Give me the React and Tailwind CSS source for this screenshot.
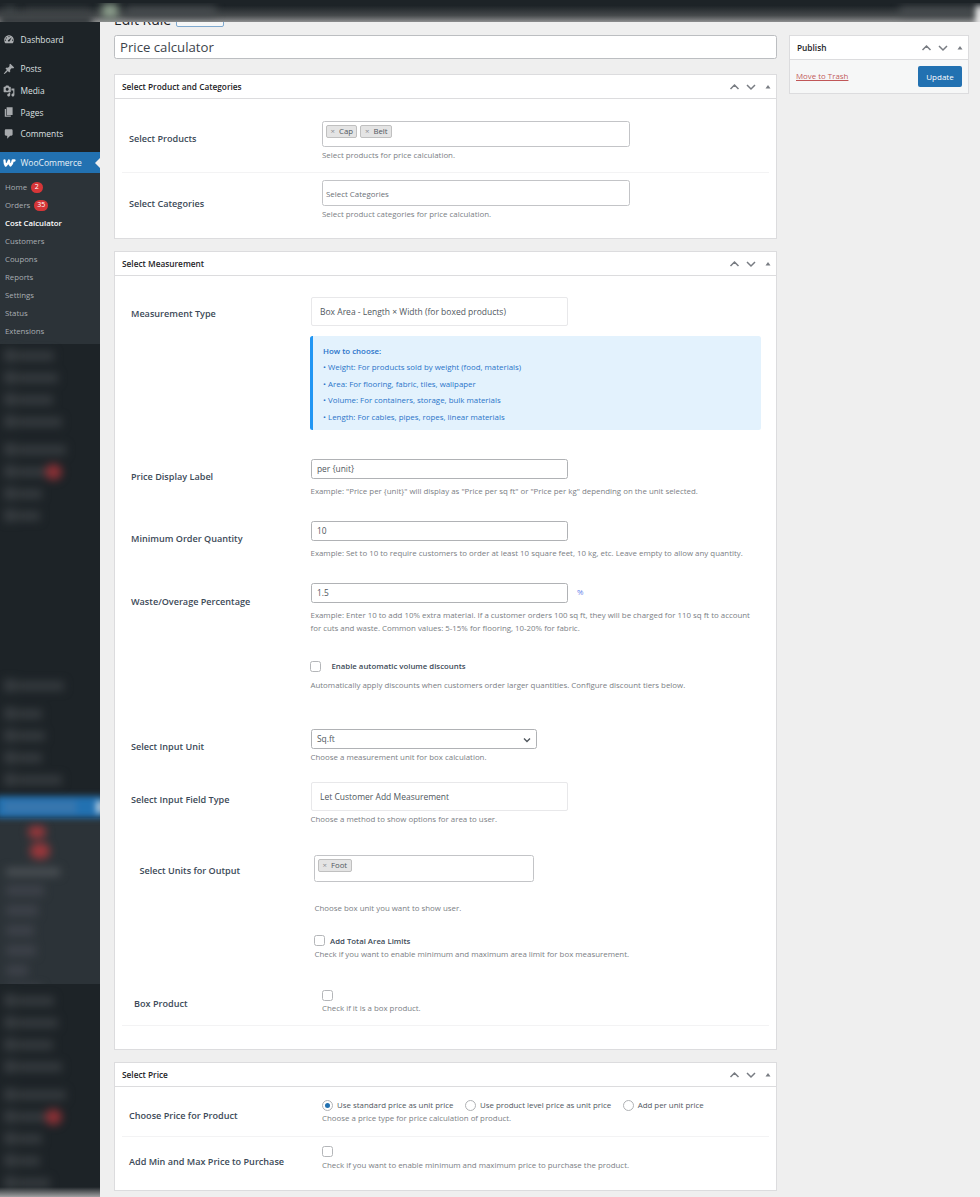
import React from 'react';
import clsx from 'clsx';

const mainMenu = [
    { name: 'Dashboard', top: 'mt-[6.500px]', path: 'M3.76 17h12.48C17.6 15.4 18 13.5 18 11.75c0-4.42-3.58-8-8-8s-8 3.58-8 8c0 1.75.42 3.65 1.76 5.25zM9 6a1 1 0 1 1 2 0 1 1 0 0 1-2 0zM4.4 8.2a1 1 0 1 1 2 0 1 1 0 0 1-2 0zM8.5 13.9c-.6-.83-.37-1.9.4-2.4.75-.5 5.6-4 5.6-4s-2.9 5.3-3.4 6.1c-.6.8-1.9 1-2.6.3zM3 12a1 1 0 1 1 2 0 1 1 0 0 1-2 0zM15 12a1 1 0 1 1 2 0 1 1 0 0 1-2 0z' },
    { name: 'Posts', top: 'mt-[8px]', path: 'M10.44 3.02l1.82-1.82 6.36 6.35-1.83 1.82c-1.05-.68-2.48-.57-3.41.36l-.75.75c-.92.93-1.04 2.35-.35 3.41l-1.83 1.82-2.41-2.41-2.8 2.79c-.42.42-3.38 2.71-3.8 2.29s1.86-3.39 2.28-3.81l2.79-2.79L4.1 9.36l1.83-1.82c1.05.69 2.48.57 3.4-.36l.75-.75c.93-.92 1.05-2.35.36-3.41z' },
    { name: 'Media', top: '', path: 'M13 11V4c0-.55-.45-1-1-1h-1.67L9 1H5L3.67 3H2c-.55 0-1 .45-1 1v7c0 .55.45 1 1 1h10c.55 0 1-.45 1-1zM7 4.5c1.38 0 2.5 1.12 2.5 2.5S8.38 9.5 7 9.5 4.5 8.38 4.5 7 5.62 4.5 7 4.5zM14 6h5v10.5c0 1.38-1.12 2.5-2.5 2.5S14 17.88 14 16.5s1.12-2.5 2.5-2.5c.17 0 .34.02.5.05V9h-3V6zM10 14.05V13h2v3.5c0 1.38-1.12 2.5-2.5 2.5S7 17.88 7 16.5 8.12 14 9.5 14c.17 0 .34.02.5.05z' },
    { name: 'Pages', top: '', path: 'M6 15V2h10v13H6zm-1 1h8v2H3V5h2v11z' },
    { name: 'Comments', top: '', path: 'M5 2h9c1.1 0 2 .9 2 2v7c0 1.1-.9 2-2 2h-2l-5 5v-5H5c-1.1 0-2-.9-2-2V4c0-1.1.9-2 2-2z' },
];

const subMenu = [
    { name: 'Home', badge: '2' },
    { name: 'Orders', badge: '35' },
    { name: 'Cost Calculator', active: true },
    { name: 'Customers' },
    { name: 'Coupons' },
    { name: 'Reports' },
    { name: 'Settings' },
    { name: 'Status' },
    { name: 'Extensions' },
];

// obscured menu entries: width of the label, extra space above, counter bubble
const hiddenTop = [
    { w: 34 }, { w: 38 }, { w: 33 }, { w: 42 },
    { w: 46, gap: 'mt-[6px]' }, { w: 28, badge: true }, { w: 22 }, { w: 20 },
];
const hiddenMiddle = [
    { w: 44 }, { w: 22, gap: 'mt-[6px]' }, { w: 25 }, { w: 22 }, { w: 42 },
];
const hiddenSub = [38, 32, 28, 30, 22, 36];

const HiddenItem = ({ w, gap, badge }) => (
    <div className={clsx('flex h-[22px] shrink-0 items-center gap-px pl-1', gap)}>
        <span className="h-[13px] w-3 bg-[#363b3f]" />
        <span className="h-[10px] bg-[#34393d]" style={{ width: w + 3 }} />
        {badge && <span className="-ml-1 h-4 w-[17px] rounded-full bg-[#8a3035]" />}
    </div>
);

const Sidebar = () => (
    <aside className="flex w-[100px] shrink-0 flex-col overflow-hidden bg-[#1d2327]">
        {mainMenu.map((item) => (
            <div key={item.name} className={clsx('flex h-[21.7px] shrink-0 items-center gap-[5.500px] pl-[3px]', item.top)}>
                <svg viewBox="0 0 20 20" className="h-3 w-3 fill-[#a7aaad]"><path fillRule="evenodd" d={item.path} /></svg>
                <span className="pt-px text-[8.4px] text-[#dfe0e1]">{item.name}</span>
            </div>
        ))}
        <div className="mt-[7px] flex h-[21.500px] shrink-0 items-center bg-[#2271b1] pl-[3px]">
            <svg viewBox="0 0 26 16" className="h-2 w-[13px] fill-none stroke-white stroke-[4.6]">
                <path strokeLinejoin="round" strokeLinecap="round" d="M3 3c0 3 .5 7 2.5 10C8 11 10.500 7 12 3c0 4 1 8 3 10 2.500-2.500 4-6 4.500-10M19.500 3H23" />
            </svg>
            <span className="ml-[4.500px] flex-1 pt-px text-[8.500px] text-[#e9f1f7]">WooCommerce</span>
            <span className="h-0 w-0 border-y-[5px] border-r-[5px] border-y-transparent border-r-[#efefef]" />
        </div>
        <div className="flex h-[170.500px] shrink-0 flex-col bg-[#2c3338] pt-[5px]">
            {subMenu.map((item) => (
                <div key={item.name} className="flex h-[18.07px] shrink-0 items-center gap-1 pl-[5px]">
                    <span className={clsx('text-[7.8px]', item.active ? 'font-semibold text-white' : 'text-[#a9aeb3]')}>{item.name}</span>
                    {item.badge && (
                        <span className="flex h-[11.500px] min-w-[11.500px] items-center justify-center rounded-full bg-[#d63638] px-[3px] text-[7px] text-white">{item.badge}</span>
                    )}
                </div>
            ))}
        </div>
        <div className="h-[300px] shrink-0 pt-px blur-[4px]">
            {hiddenTop.map((item, i) => <HiddenItem key={i} {...item} />)}
        </div>
        <div className="mt-[30px] h-[122px] shrink-0 pt-px blur-[4px]">
            {hiddenMiddle.map((item, i) => <HiddenItem key={i} {...item} />)}
        </div>
        <div className="-mx-1 flex h-[22px] shrink-0 items-center justify-between bg-[#2271b1] pl-2 blur-[3px]">
            <span className="h-3 w-[72px] bg-[#3876ae]" />
            <span className="h-3 w-2 bg-[#b5cde2]" />
        </div>
        <div className="h-[166px] shrink-0 overflow-hidden bg-[#2c3338]">
            <div className="flex flex-col gap-[9px] pt-[8px] pl-[6px] blur-[4px]">
                <div className="ml-[22px] h-3 w-[18px] rounded-full bg-[#9a373b]" />
                <div className="-mt-1 ml-6 h-4 w-5 rounded-full bg-[#9a373b]" />
                <div className="h-2 w-[54px] bg-[#4c5155]" />
                {hiddenSub.map((w, i) => <div key={i} className="h-[11px] bg-[#3d4149]" style={{ width: w }} />)}
            </div>
        </div>
        <div className="mt-[6px] shrink-0 blur-[4px]">
            {hiddenTop.map((item, i) => <HiddenItem key={i} {...item} />)}
            <HiddenItem w={30} />
        </div>
    </aside>
);

const Panel = ({ title, className, children }) => (
    <section className={clsx('border border-[#dcdcde] bg-white', className)}>
        <header className="flex h-[24px] items-center border-b border-[#dcdcde] pr-[5px] pl-[7px]">
            <h2 className="flex-1 pt-px text-[8.3px] font-semibold text-[#1d2327]">{title}</h2>
            <svg viewBox="0 0 42 10" className="h-[10px] w-[42px] fill-none stroke-[#787c82] stroke-[1.5]">
                <path d="M1.500 7l4-4 4 4M18 3l4 4 4-4" />
                <path className="fill-[#787c82] stroke-none" d="M36.500 6.500l2.500-3.500 2.500 3.500z" />
            </svg>
        </header>
        {children}
    </section>
);

const Row = ({ label, className, labelClass, fieldClass, children }) => (
    <div className={clsx('flex', className)}>
        <div className={clsx('shrink-0 text-[9.1px] leading-[13px] font-semibold text-[#3c4a58]', labelClass)}>{label}</div>
        <div className={clsx('min-w-0 flex-1', fieldClass)}>{children}</div>
    </div>
);

const Help = ({ className, children }) => (
    <p className={clsx('text-[7.89px] leading-[13px] whitespace-nowrap text-[#7b8085]', className)}>{children}</p>
);

const Checkbox = () => <span className="block h-[11px] w-[11px] shrink-0 rounded-[2.500px] border border-[#b4b6b9] bg-white" />;

const TextBox = ({ children }) => (
    <div className="flex h-[20px] w-[257px] shrink-0 items-center rounded-[2.500px] border border-[#b0b2b5] pt-px pl-[5px] text-[8.4px] text-[#50575e]">{children}</div>
);

const StaticBox = ({ children }) => (
    <div className="flex h-[29px] w-[257px] items-center rounded-[2px] border border-[#e8e8ea] pt-[2px] pl-2 text-[8.500px] text-[#50575e]">{children}</div>
);

const TagBox = ({ tags, className, placeholder }) => (
    <div className={clsx('flex items-start gap-[3px] rounded-[2.500px] border border-[#c3c4c7] px-[3px] pt-[3px]', className)}>
        {tags.map((tag) => (
            <span key={tag} className="flex h-[13px] items-center gap-1 rounded-[2px] border border-[#c0c0c0] bg-[#e4e4e4] px-[3.500px] pt-px text-[7.8px] text-[#50575e]">
                <span className="text-[#8c8f94]">×</span>{tag}
            </span>
        ))}
        {placeholder && <span className="pt-1 text-[7.9px] leading-[13px] text-[#6c7177]">{placeholder}</span>}
    </div>
);

const Radio = ({ checked, children }) => (
    <label className="flex items-center gap-[4px] text-[7.9px] text-[#50575e]">
        <span className="flex h-[11px] w-[11px] items-center justify-center rounded-full border border-[#b0b2b5] bg-white">
            {checked && <span className="h-[5px] w-[5px] rounded-full bg-[#2271b1]" />}
        </span>
        <span className="pt-px">{children}</span>
    </label>
);

const tips = [
    'Weight: For products sold by weight (food, materials)',
    'Area: For flooring, fabric, tiles, wallpaper',
    'Volume: For containers, storage, bulk materials',
    'Length: For cables, pipes, ropes, linear materials',
];

const App = () => (
    <div className="relative flex h-[1197px] w-[980px] flex-col overflow-hidden bg-[#efefef] font-['Open_Sans',sans-serif]">
        <div className="relative flex h-[22px] shrink-0 items-center gap-2 overflow-hidden bg-linear-to-b from-[#1d2327] from-25% via-[#45494b] via-70% to-[#8e8f90] pl-1">
            <span className="h-3 w-3 bg-[#4a4f52]/50 blur-[4px]" />
            <span className="h-2 w-[66px] bg-[#4a4f52]/40 blur-[4px]" />
            <span className="ml-1 h-[14px] w-[16px] bg-[#8ea08e] blur-[4px]" />
            <span className="h-2 w-[90px] bg-[#4a4f52] blur-[4px]" />
            <span className="mr-1 ml-auto h-2 w-[76px] bg-[#4a4f52] blur-[4px]" />
            <span className="absolute -bottom-1 left-0 h-[10px] w-[92px] bg-[#33383b] blur-[3px]" />
            <span className="absolute -right-1 -bottom-1 h-5 w-2 bg-white blur-[3px]" />
            <span className="absolute inset-x-0 top-0 h-[3px] bg-[#1d2327]" />
        </div>
        <div className="flex h-[1175px]">
            <Sidebar />
            <main className="flex w-[677px] shrink-0 flex-col pl-[14px]">
                <div className="flex h-[5px] shrink-0 items-end overflow-hidden">
                    <h1 className="mb-[-2px] text-[14px] leading-[19px] text-[#1d2327]">Edit Rule</h1>
                    <span className="ml-[5px] h-[14px] w-[48px] rounded-[2px] border border-[#7fa9cf] bg-[#f6f7f7]" />
                </div>
                <div className="mt-[8px] flex h-[24px] shrink-0 items-center rounded-[2.500px] border border-[#bcbec1] bg-white pt-[2px] pl-[5px] text-[13.2px] text-[#3c434a]">Price calculator</div>

                <Panel title="Select Product and Categories" className="mt-[15px] h-[165px] shrink-0">
                    <Row label="Select Products" className="mx-[7px] h-[74px] border-b border-[#f3f3f4]" labelClass="w-[200px] pl-[7px] pt-[33px]" fieldClass="pt-[22px]">
                        <TagBox tags={['Cap', 'Belt']} className="h-[26px] w-[308px]" />
                        <Help className="mt-[2px]">Select products for price calculation.</Help>
                    </Row>
                    <Row label="Select Categories" className="mx-[7px]" labelClass="w-[200px] pl-[7px] pt-[23.500px]" fieldClass="pt-[7px]">
                        <TagBox tags={[]} placeholder="Select Categories" className="h-[26px] w-[308px]" />
                        <Help className="mt-[2px]">Select product categories for price calculation.</Help>
                    </Row>
                </Panel>

                <Panel title="Select Measurement" className="mt-[12px] h-[799px] shrink-0">
                    <Row label="Measurement Type" className="h-[170px]" labelClass="w-[196px] pl-4 pt-[31px]" fieldClass="pt-[21px]">
                        <StaticBox>Box Area - Length × Width (for boxed products)</StaticBox>
                        <div className="-ml-px mt-[10px] h-[94px] w-[451px] rounded-[2.500px] border-l-[3px] border-[#2196f3] bg-[#e3f2fd] pt-[6.500px] pl-[10px] text-[7.89px] leading-[16.500px] text-[#2a74c9]">
                            <p className="font-semibold">How to choose:</p>
                            {tips.map((tip) => <p key={tip}>• {tip}</p>)}
                        </div>
                    </Row>
                    <Row label="Price Display Label" className="h-[62px]" labelClass="w-[196px] pl-4 pt-[24px]" fieldClass="pt-[13px]">
                        <TextBox>{'per {unit}'}</TextBox>
                        <Help className="-ml-[0.500px] mt-[6px]">{'Example: "Price per {unit}" will display as "Price per sq ft" or "Price per kg" depending on the unit selected.'}</Help>
                    </Row>
                    <Row label="Minimum Order Quantity" className="h-[62px]" labelClass="w-[196px] pl-4 pt-[24px]" fieldClass="pt-[13px]">
                        <TextBox>10</TextBox>
                        <Help className="-ml-[0.500px] mt-[6px]">Example: Set to 10 to require customers to order at least 10 square feet, 10 kg, etc. Leave empty to allow any quantity.</Help>
                    </Row>
                    <Row label="Waste/Overage Percentage" className="h-[146px]" labelClass="w-[196px] pl-4 pt-[24.500px]" fieldClass="pt-[13px]">
                        <div className="flex items-center gap-[9px]">
                            <TextBox>1.5</TextBox>
                            <span className="text-[7.8px] text-[#667eea]">%</span>
                        </div>
                        <Help className="-ml-[0.500px] mt-[6px]">Example: Enter 10 to add 10% extra material. If a customer orders 100 sq ft, they will be charged for 110 sq ft to account</Help>
                        <Help className="-ml-[0.500px]">for cuts and waste. Common values: 5-15% for flooring, 10-20% for fabric.</Help>
                        <div className="-ml-px mt-[26px] flex h-[11px] items-center gap-[10.500px] text-[7.8px] font-semibold text-[#3c4a58]">
                            <Checkbox /><span className="pt-px">Enable automatic volume discounts</span>
                        </div>
                        <Help className="-ml-[0.500px] mt-[7px]">Automatically apply discounts when customers order larger quantities. Configure discount tiers below.</Help>
                    </Row>
                    <Row label="Select Input Unit" className="h-[54px]" labelClass="w-[196px] pl-4 pt-[24px]" fieldClass="pt-[13px]">
                        <div className="flex h-[20px] w-[226px] items-center justify-between rounded-[2.500px] border border-[#b0b2b5] pt-px pr-[5px] pl-[5px] text-[8.4px] text-[#50575e]">
                            Sq.ft
                            <svg viewBox="0 0 8 6" className="h-[6px] w-[8px] fill-none stroke-[#50575e] stroke-[1.4]"><path d="M1 1.500l3 3 3-3" /></svg>
                        </div>
                        <Help className="-ml-[0.500px] mt-[1.500px]">Choose a measurement unit for box calculation.</Help>
                    </Row>
                    <Row label="Select Input Field Type" className="h-[73px]" labelClass="w-[196px] pl-4 pt-[23px]" fieldClass="pt-[12px]">
                        <StaticBox>Let Customer Add Measurement</StaticBox>
                        <Help className="-ml-[0.500px] mt-[2px]">Choose a method to show options for area to user.</Help>
                    </Row>
                    <Row label="Select Units for Output" className="h-[135px]" labelClass="w-[199px] pl-[24.500px] pt-[21px]" fieldClass="pt-[12px]">
                        <TagBox tags={['Foot']} className="h-[27px] w-[220px]" />
                        <Help className="mt-[20px] pl-[0.500px]">Choose box unit you want to show user.</Help>
                        <div className="mt-[20px] flex h-[11px] items-center gap-[5px] text-[7.8px] font-semibold text-[#3c4a58]">
                            <Checkbox /><span className="pt-[2px]">Add Total Area Limits</span>
                        </div>
                        <Help className="mt-[2px] pl-[0.500px]">Check if you want to enable minimum and maximum area limit for box measurement.</Help>
                    </Row>
                    <Row label="Box Product" className="mx-[7px] h-[48px] border-b border-[#f3f3f4]" labelClass="w-[200px] pl-[12px] pt-[18.500px]" fieldClass="pt-[12px]">
                        <Checkbox />
                        <Help className="mt-px">Check if it is a box product.</Help>
                    </Row>
                </Panel>

                <Panel title="Select Price" className="mt-[12px] h-[129px] shrink-0">
                    <Row label="Choose Price for Product" className="mx-[7px] h-[50px] border-b border-[#f3f3f4]" labelClass="w-[200px] pl-[7px] pt-[21.500px]" fieldClass="pt-[12px]">
                        <div className="flex h-[12px] items-center gap-[11.500px]">
                            <Radio checked>Use standard price as unit price</Radio>
                            <Radio>Use product level price as unit price</Radio>
                            <Radio>Add per unit price</Radio>
                        </div>
                        <Help className="mt-px">Choose a price type for price calculation of product.</Help>
                    </Row>
                    <Row label="Add Min and Max Price to Purchase" className="mx-[7px]" labelClass="w-[200px] pl-[7px] pt-[18px]" fieldClass="pt-[9px]">
                        <Checkbox />
                        <Help className="mt-[2px]">Check if you want to enable minimum and maximum price to purchase the product.</Help>
                    </Row>
                </Panel>
            </main>
            <div className="pt-[13px] pl-[12px]">
                <Panel title="Publish" className="h-[59px] w-[180px]">
                    <div className="flex h-[33px] items-center justify-between bg-[#f6f7f7] pr-[6px] pl-[6px]">
                        <span className="text-[7.9px] text-[#b32d2e]/80 underline">Move to Trash</span>
                        <button className="h-[21px] w-[44px] rounded-[2px] bg-[#2271b1] pt-px text-[8px] text-white">Update</button>
                    </div>
                </Panel>
            </div>
        </div>
        <div className="absolute bottom-0 left-0 h-[10px] w-[100px] bg-linear-to-b from-transparent to-[#a0a1a2]" />
    </div>
);

export default App;
